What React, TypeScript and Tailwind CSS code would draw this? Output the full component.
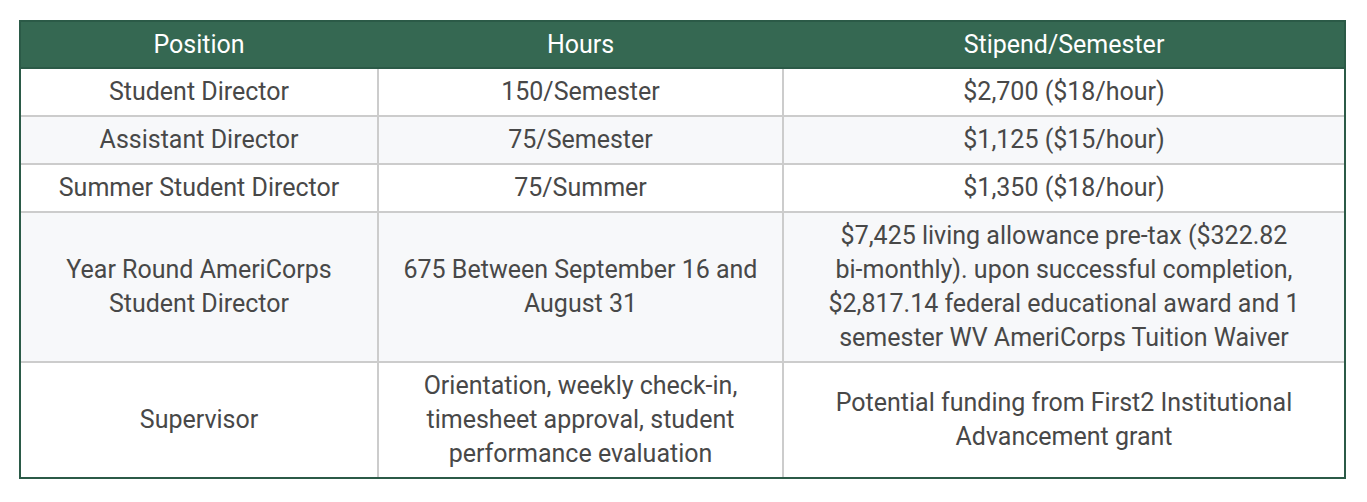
import React from "react";

const rows: { a: string[]; b: string[]; c: string[] }[] = [
  { a: ["Student Director"], b: ["150/Semester"], c: ["$2,700 ($18/hour)"] },
  { a: ["Assistant Director"], b: ["75/Semester"], c: ["$1,125 ($15/hour)"] },
  { a: ["Summer Student Director"], b: ["75/Summer"], c: ["$1,350 ($18/hour)"] },
  {
    a: ["Year Round AmeriCorps", "Student Director"],
    b: ["675 Between September 16 and", "August 31"],
    c: [
      "$7,425 living allowance pre-tax ($322.82",
      "bi-monthly). upon successful completion,",
      "$2,817.14 federal educational award and 1",
      "semester WV AmeriCorps Tuition Waiver",
    ],
  },
  {
    a: ["Supervisor"],
    b: ["Orientation, weekly check-in,", "timesheet approval, student", "performance evaluation"],
    c: ["Potential funding from First2 Institutional", "Advancement grant"],
  },
];

function Cell({ lines, bg }: { lines: string[]; bg: string }) {
  return (
    <div className={`${bg} flex flex-col items-center justify-center px-[12px] py-[6px] text-center`}>
      {lines.map((l, i) => (
        <span key={i} className="block whitespace-nowrap">
          {l}
        </span>
      ))}
    </div>
  );
}

export default function App() {
  return (
    <div
      className="bg-white w-[1367px] h-[502px] pt-[20px] pl-[19px]"
      style={{ fontFamily: "Roboto, 'Liberation Sans', sans-serif" }}
    >
      <div className="w-[1327px] border-2 border-[#2b5a47]">
        <div className="grid grid-cols-[356px_403px_560px] gap-x-[2px] bg-[#356852] border-b-2 border-[#2b5a47] h-[47px] text-white text-[25px] leading-[34px]">
          <div className="flex items-center justify-center">Position</div>
          <div className="flex items-center justify-center">Hours</div>
          <div className="flex items-center justify-center">Stipend/Semester</div>
        </div>
        <div className="grid grid-cols-[356px_403px_560px] gap-[2px] bg-[#cccccc] text-[#484848] text-[25px] leading-[34px]">
          {rows.map((r, i) => {
            const rowBg = i === 1 || i === 3 ? "bg-[#f7f8fa]" : "bg-white";
            return (
              <React.Fragment key={i}>
                <Cell lines={r.a} bg={rowBg} />
                <Cell lines={r.b} bg={rowBg} />
                <Cell lines={r.c} bg={rowBg} />
              </React.Fragment>
            );
          })}
        </div>
      </div>
    </div>
  );
}
